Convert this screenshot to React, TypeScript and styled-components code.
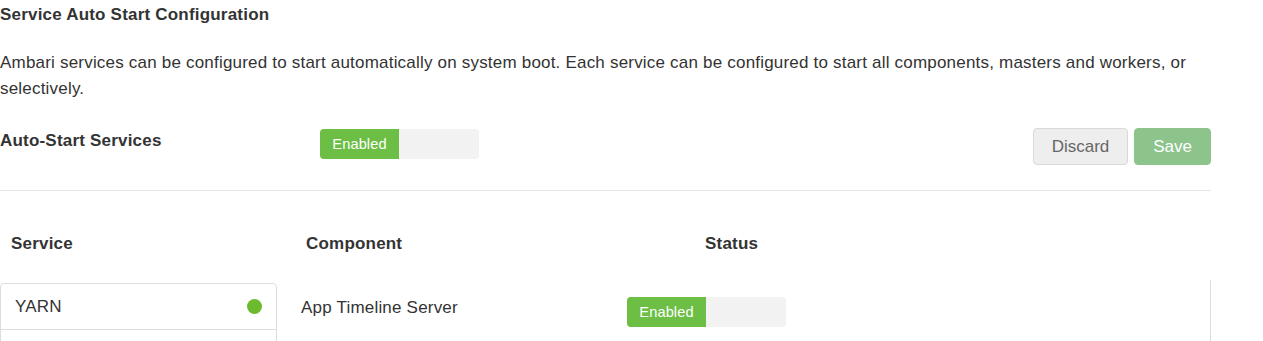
import React from 'react';
import styled, { createGlobalStyle } from 'styled-components';

interface ServiceItem {
  name: string;
  running: boolean;
}

interface ComponentItem {
  name: string;
  enabled: boolean;
}

// second row only shows its top border in the frame
const services: ServiceItem[] = [
  { name: 'YARN', running: true },
  { name: '', running: false }
];

const components: ComponentItem[] = [{ name: 'App Timeline Server', enabled: true }];

const Switch = ({ enabled }: { enabled: boolean }) => (
  <SwitchBox>
    <SwitchOn $active={enabled}>{enabled ? 'Enabled' : ''}</SwitchOn>
    <SwitchOff />
  </SwitchBox>
);

const App = () => {
  return (
    <Page>
      <GlobalStyle />
      <Title>Service Auto Start Configuration</Title>
      <Description>
        Ambari services can be configured to start automatically on system boot. Each service can be
        configured to start all components, masters and workers, or selectively.
      </Description>
      <SettingsRow>
        <SettingLabel>Auto-Start Services</SettingLabel>
        <SwitchSlot>
          <Switch enabled={true} />
        </SwitchSlot>
        <Actions>
          <Button>Discard</Button>
          <Button $primary disabled>
            Save
          </Button>
        </Actions>
      </SettingsRow>
      <Divider />
      <HeaderRow>
        <HeaderCell>Service</HeaderCell>
        <HeaderCell>Component</HeaderCell>
        <HeaderCell>Status</HeaderCell>
      </HeaderRow>
      <Body>
        <ServiceList>
          {services.map((s, i) => (
            <ServiceRow key={i}>
              {s.name}
              {s.running && <StatusDot />}
            </ServiceRow>
          ))}
        </ServiceList>
        <ComponentPanel>
          {components.map((c, i) => (
            <ComponentRow key={i}>
              <ComponentName>{c.name}</ComponentName>
              <ComponentSwitch>
                <Switch enabled={c.enabled} />
              </ComponentSwitch>
            </ComponentRow>
          ))}
        </ComponentPanel>
      </Body>
    </Page>
  );
};

export default App;

const GlobalStyle = createGlobalStyle`
  body {
    margin: 0;
    background: #fff;
    color: #333;
    font-family: "Liberation Sans", Arial, sans-serif;
    font-size: 17px;
    line-height: 24px;
    letter-spacing: 0.2px;
  }
`;

const Page = styled.div`
  width: 1211px;
  padding-top: 3px;
`;

const Title = styled.div`
  font-weight: 700;
`;

const Description = styled.p`
  margin: 23px 0 0;
  line-height: 26px;
`;

const SettingsRow = styled.div`
  display: flex;
  align-items: flex-start;
  margin-top: 25px;
`;

const SettingLabel = styled.div`
  width: 320px;
  padding-top: 2px;
  font-weight: 700;
`;

const SwitchSlot = styled.div`
  margin-top: 2px;
`;

const SwitchBox = styled.div`
  display: flex;
  width: 159px;
  height: 30px;
  border-radius: 4px;
  overflow: hidden;
  background: #f2f2f2;
`;

const SwitchOn = styled.div<{ $active: boolean }>`
  width: 79px;
  display: flex;
  align-items: center;
  justify-content: center;
  background: ${p => (p.$active ? '#6dbe45' : '#f2f2f2')};
  color: #fff;
  font-size: 14.6px;
  letter-spacing: 0.1px;
`;

const SwitchOff = styled.div`
  flex: 1;
`;

const Actions = styled.div`
  margin-left: auto;
  margin-top: 1px;
  display: flex;
  gap: 6px;
`;

const Button = styled.button<{ $primary?: boolean }>`
  height: 37px;
  padding: 0 18px;
  border-radius: 4px;
  font-family: inherit;
  font-size: 17px;
  letter-spacing: 0;
  border: 1px solid ${p => (p.$primary ? '#8cc48c' : '#d9d9d9')};
  background: ${p => (p.$primary ? '#8cc48c' : '#eeeeee')};
  color: ${p => (p.$primary ? '#fff' : '#666')};
  cursor: pointer;
`;

const Divider = styled.div`
  margin-top: 25px;
  border-top: 1px solid #e8e8e8;
`;

const HeaderRow = styled.div`
  display: grid;
  grid-template-columns: 306px 399px 1fr;
  margin-top: 41px;
`;

const HeaderCell = styled.div`
  font-weight: 700;
  &:first-child {
    padding-left: 11px;
  }
`;

const Body = styled.div`
  display: flex;
  align-items: flex-start;
  margin-top: 24px;
`;

const ServiceList = styled.div`
  width: 277px;
  margin-top: 3px;
`;

const ServiceRow = styled.div`
  display: flex;
  align-items: center;
  justify-content: space-between;
  box-sizing: border-box;
  height: 47px;
  padding: 0 14px;
  border: 1px solid #ddd;
  background: #fff;
  &:first-child {
    border-radius: 4px 4px 0 0;
  }
  & + & {
    margin-top: -1px;
  }
`;

const StatusDot = styled.span`
  width: 15px;
  height: 15px;
  border-radius: 50%;
  background: #6cbb2f;
`;

const ComponentPanel = styled.div`
  flex: 1;
  min-height: 120px;
  padding-left: 24px;
  border-right: 1px solid #ddd;
`;

const ComponentRow = styled.div`
  display: grid;
  grid-template-columns: 326px auto;
  align-items: start;
`;

const ComponentName = styled.div`
  padding-top: 16px;
`;

const ComponentSwitch = styled.div`
  margin-top: 17px;
`;
